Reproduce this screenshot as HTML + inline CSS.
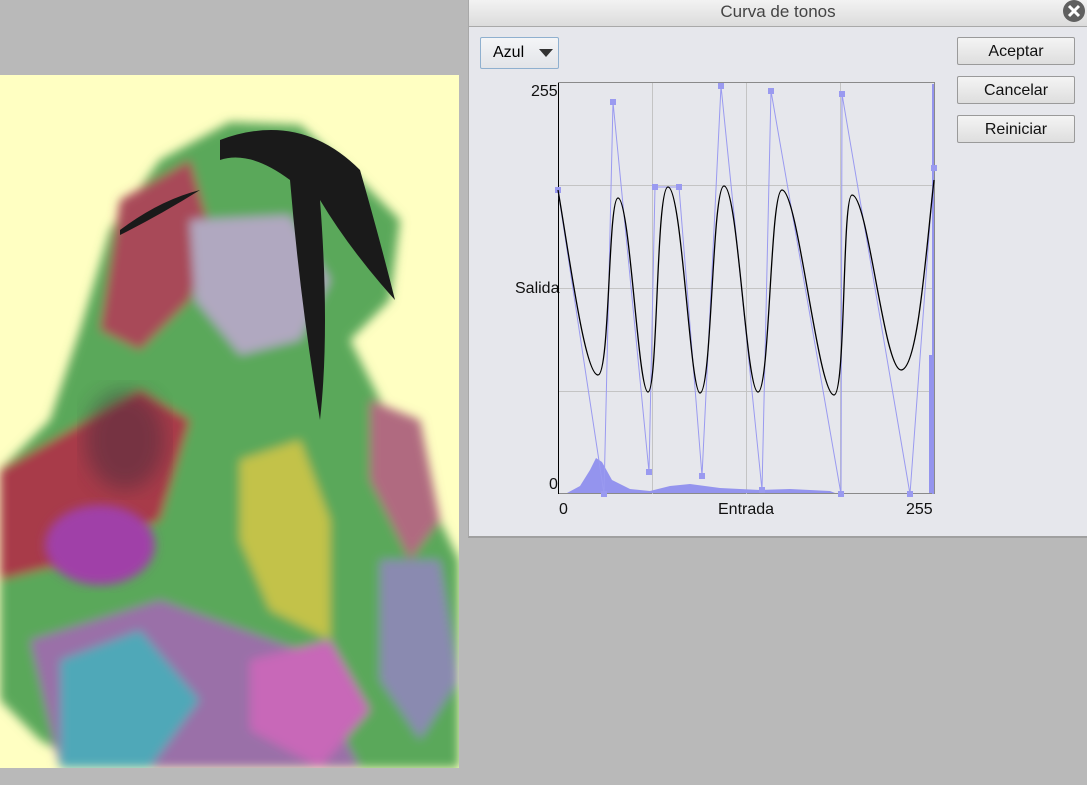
<!DOCTYPE html>
<html><head><meta charset="utf-8"><style>
body{margin:0;width:1087px;height:785px;background:#b9b9b9;position:relative;overflow:hidden;font-family:"Liberation Sans",sans-serif}
.dlg{position:absolute;left:468px;top:0;width:619px;height:538px;background:#e6e7ec;border-left:1px solid #a8a8a8;border-bottom:2px solid #a0a0a0;box-sizing:border-box}
.title{height:26px;background:linear-gradient(#f2f2f2,#dcdcdc);border-bottom:1px solid #a9a9a9;text-align:center;font-size:17px;line-height:24px;color:#444}
.btn{position:absolute;left:488px;width:118px;height:28px;border:1px solid #9a9a9a;border-radius:2px;background:linear-gradient(#f4f4f4,#dedede);font-size:16px;text-align:center;line-height:27px;color:#111;box-sizing:border-box}
.dd{position:absolute;left:11px;top:37px;width:79px;height:32px;border:1px solid #8fb0cf;border-radius:2px;background:linear-gradient(#f4f5f7,#e2e4e8);box-sizing:border-box;font-size:16px;line-height:30px;padding-left:12px}
.lab{position:absolute;font-size:16px;color:#111}
</style></head><body>
<svg style="position:absolute;left:0;top:75px" width="459" height="693" viewBox="0 75 459 693">
<defs><filter id="b"><feGaussianBlur stdDeviation="5"/></filter><filter id="b2"><feGaussianBlur stdDeviation="10"/></filter></defs>
<rect x="0" y="75" width="459" height="693" fill="#ffffc2"/>
<g filter="url(#b)">
<path d="M0 470 L50 420 L80 330 L110 230 L160 160 L230 122 L300 125 L360 180 L400 220 L390 300 L350 340 L380 400 L420 480 L459 560 L459 768 L90 768 L40 740 L0 700Z" fill="#5aa85a"/>
<path d="M0 470 L70 430 L140 390 L190 420 L160 520 L80 560 L0 580Z" fill="#a83a48"/>
<path d="M30 640 L160 600 L300 650 L360 768 L60 768Z" fill="#9a70a8"/>
<path d="M240 460 L300 440 L330 520 L330 640 L270 610 L240 540Z" fill="#c3c24a"/>
<path d="M120 200 L190 160 L210 230 L190 300 L140 350 L100 330Z" fill="#a84a58"/>
<path d="M370 400 L420 420 L440 520 L410 560 L370 480Z" fill="#b06a80"/>
<path d="M190 220 L290 215 L330 280 L300 340 L240 355 L195 300Z" fill="#b0a8c0"/>
<path d="M60 660 L140 630 L200 700 L150 768 L60 768Z" fill="#50a8b8"/>
<path d="M250 660 L330 640 L370 710 L320 768 L250 730Z" fill="#c868b8"/>
<path d="M380 560 L440 560 L459 680 L420 740 L380 680Z" fill="#8a8ab0"/>
</g>
<ellipse cx="100" cy="545" rx="55" ry="40" fill="#a040a8" filter="url(#b)"/>
<ellipse cx="125" cy="440" rx="40" ry="50" fill="#3a2a3a" opacity=".45" filter="url(#b2)"/>
<path d="M220 140 Q300 110 360 170 Q380 240 395 300 Q350 250 320 200 Q330 330 320 420 Q300 300 290 180 Q250 150 220 160Z" fill="#1a1a1a"/>
<path d="M120 230 Q160 200 200 190 Q160 215 120 235Z" fill="#1a1a1a"/>
</svg>
<div class="dlg">
<div class="title">Curva de tonos</div>
<svg style="position:absolute;left:592px;top:-2px" width="26" height="26"><circle cx="13" cy="13" r="11" fill="#606060"/><path d="M8 8L18 18M18 8L8 18" stroke="#fff" stroke-width="3"/></svg>
<div class="dd">Azul<svg style="position:absolute;left:58px;top:11px" width="14" height="9"><path d="M0 0H14L7 8Z" fill="#333"/></svg></div>
<div class="btn" style="top:37px">Aceptar</div>
<div class="btn" style="top:76px">Cancelar</div>
<div class="btn" style="top:115px">Reiniciar</div>
<div class="lab" style="left:62px;top:83px">255</div>
<div class="lab" style="left:46px;top:280px">Salida</div>
<div class="lab" style="left:80px;top:476px">0</div>
<div class="lab" style="left:90px;top:501px">0</div>
<div class="lab" style="left:249px;top:501px">Entrada</div>
<div class="lab" style="left:437px;top:501px">255</div>
</div>
<svg style="position:absolute;left:0;top:0" width="1087" height="785">
<rect x="558.5" y="82.5" width="376" height="411" fill="none" stroke="#8a8a8a"/>
<path d="M652.5 83V494M746.5 83V494M840.5 83V494M559 185.5H934M559 288.5H934M559 391.5H934" stroke="#c4c4c4"/>
<line x1="558.5" y1="83" x2="558.5" y2="494" stroke="#000"/>
<path d="M567 493 L580 486 L590 470 L596 458 L602 462 L612 480 L630 489 L650 491 L670 486 L690 484 L720 488 L760 490 L790 489 L830 491 L835 493Z" fill="#9494ee"/>
<rect x="929" y="355" width="4" height="138" fill="#9494ee"/>
<rect x="932" y="84" width="2" height="410" fill="#9494ee"/>
<polyline fill="none" stroke="#9a9af0" stroke-width="1" points="558,190 604,494 613,102 649,472 655,187 679,187 702,476 721,86 762,490 771,91 841,494 842,94 910,494 934,168"/>
<g fill="#9a9af0">
<rect x="555" y="187" width="6" height="6"/><rect x="601" y="491" width="6" height="6"/><rect x="610" y="99" width="6" height="6"/><rect x="646" y="469" width="6" height="6"/><rect x="652" y="184" width="6" height="6"/><rect x="676" y="184" width="6" height="6"/><rect x="699" y="473" width="6" height="6"/><rect x="718" y="83" width="6" height="6"/><rect x="759" y="487" width="6" height="6"/><rect x="768" y="88" width="6" height="6"/><rect x="838" y="491" width="6" height="6"/><rect x="839" y="91" width="6" height="6"/><rect x="907" y="491" width="6" height="6"/><rect x="931" y="165" width="6" height="6"/>
</g>
<path fill="none" stroke="#000" stroke-width="1.3" d="M558 190 C570 260 585 375 598 375 C610 375 608 198 618 198 C630 198 638 392 648 392 C658 392 656 187 668 187 C682 187 690 393 700 393 C712 393 712 186 724 186 C738 186 746 392 758 392 C770 392 770 190 782 190 C798 190 818 395 834 395 C846 395 842 195 852 195 C868 195 884 370 901 370 C918 370 926 250 934 180"/>
</svg>
</body></html>
